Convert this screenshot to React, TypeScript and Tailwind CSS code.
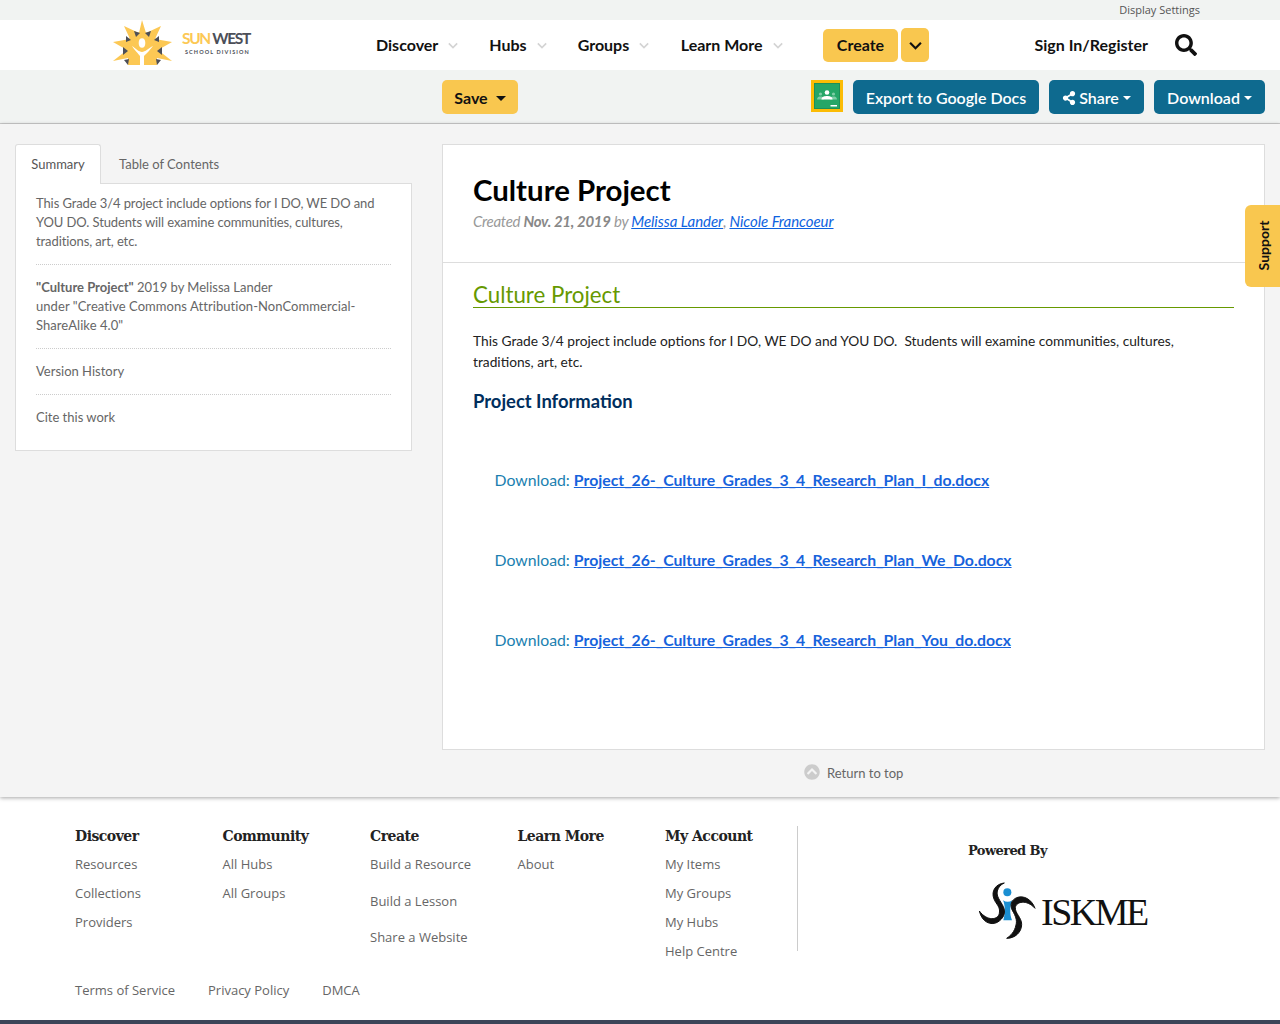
import React from "react";
import { FaSearch, FaShareAlt, FaChevronCircleUp } from "react-icons/fa";

const lato = "font-['Lato',sans-serif]";
const open = "font-['Open_Sans',sans-serif]";

function Caret({ className = "" }: { className?: string }) {
  return <span className={`inline-block w-0 h-0 border-x-[4px] border-x-transparent border-t-[4px] border-t-current ${className}`} />;
}

function Chevron({ className = "" }: { className?: string }) {
  return (
    <svg viewBox="0 0 12 8" className={className} fill="none" stroke="currentColor" strokeWidth="2">
      <path d="M1 1.5 6 6.5 11 1.5" />
    </svg>
  );
}

function SunLogo() {
  return (
    <svg viewBox="0 0 60 45" className="w-[60px] h-[45px] block shrink-0">
      <g fill="#fcc854">
        <path d="M29 0 33 13 48 6 42 19 59 22 45 30 59 41 44 38 44 45 15 45 15 38 0 41 14 30 0 22 17 19 11 6 26 13Z" />
        <circle cx="29.5" cy="29" r="17" />
      </g>
      <g fill="#4c4f58">
        <path d="M21 11 27 13 23 17Z" />
        <path d="M32 13 38 11 36 17Z" />
        <path d="M13 16 18 20 13 22Z" />
        <path d="M46 16 41 20 46 22Z" />
        <path d="M10 27 15 31 10 35Z" />
        <path d="M49 27 44 31 49 35Z" />
        <path d="M11 40 16 39 15 45Z" />
        <path d="M48 40 43 39 44 45Z" />
      </g>
      <ellipse cx="29" cy="23" rx="3.300" ry="4.800" fill="#fff" />
      <path d="M19 26C22 31 25 33 27 36L27 45 31 45 31 36C34 33 37 30 40 26 36 28 32 32 29 32 26 32 22 28 19 26Z" fill="#fff" />
    </svg>
  );
}

function NavItem({ label, className = "" }: { label: string; className?: string }) {
  return (
    <div className={`flex items-center ${className}`}>
      <span className="text-[16px] font-bold text-[#111] leading-none">{label}</span>
      <Chevron className="w-[10px] h-[7px] ml-[10px] text-[#d4d4d4]" />
    </div>
  );
}

function Classroom() {
  return (
    <div className="w-[32px] h-[32px] border-[3px] border-[#fbbc05] bg-[#25a667] shrink-0">
      <svg viewBox="0 0 26 26" className="w-[26px] h-[26px] block">
        <rect x="0.500" y="0.500" width="25" height="25" fill="none" stroke="#1e8f58" />
        <circle cx="6.500" cy="11" r="1.600" fill="#7fcda6" />
        <circle cx="19.500" cy="11" r="1.600" fill="#7fcda6" />
        <path d="M3 16.500C3 14 5 13.500 6.500 13.500S10 14 10 16.500ZM16 16.500C16 14 18 13.500 19.500 13.500S23 14 23 16.500Z" fill="#7fcda6" />
        <circle cx="13" cy="9.500" r="2.300" fill="#fff" />
        <path d="M7.500 16.500C7.500 13.500 10.500 13 13 13S18.500 13.500 18.500 16.500Z" fill="#fff" />
        <rect x="16.500" y="22" width="6.500" height="1.500" fill="#fff" />
      </svg>
    </div>
  );
}

function BlueBtn({ children, className = "" }: { children: React.ReactNode; className?: string }) {
  return (
    <button className={`h-[34px] pt-[2px] rounded-[5px] bg-[#0e6a8f] text-white text-[16px] font-semibold flex items-center justify-center ${className}`}>
      {children}
    </button>
  );
}

function Header() {
  return (
    <header className={lato}>
      <div className="h-5 bg-[#f1f3f2] flex justify-end pr-[80px] pb-[1px] items-center">
        <a className={`${open} text-[11px] text-[#555] leading-none`}>Display Settings</a>
      </div>
      <div className="h-[50px] bg-white flex items-center relative">
        <div className="ml-[113px] w-[263px] flex items-start h-[45px] self-start">
          <SunLogo />
          <div className="ml-[9px] mt-[10px]">
            <div className="text-[15.500px] font-bold leading-[16px] tracking-[-1.350px]">
              <span className="text-[#fcc854]">SUN</span> <span className="text-[#4c4f58]">WEST</span>
            </div>
            <div className="text-[5.500px] font-bold text-[#4c4f58] tracking-[1.100px] leading-[7px] mt-[2.500px] pl-[3px] whitespace-nowrap">SCHOOL DIVISION</div>
          </div>
        </div>
        <div className="flex items-center gap-[32px] w-[447px]">
          <NavItem label="Discover" />
          <NavItem label="Hubs" className="-ml-[1px]" />
          <NavItem label="Groups" className="-ml-[1px]" />
          <NavItem label="Learn More" className="-ml-[0.500px]" />
        </div>
        <div className="flex items-center">
          <button className="w-[75px] h-[33px] bg-[#f9c74f] rounded-[5px] text-[16px] font-bold text-[#111]">Create</button>
          <button className="ml-[3px] w-[28px] h-[34px] bg-[#f9c74f] rounded-[5px] flex items-center justify-center text-[#111]">
            <Chevron className="w-[13px] h-[9px]" />
          </button>
        </div>
        <span className="ml-[105.500px] text-[16px] font-bold text-[#111]">Sign In/Register</span>
        <FaSearch className="ml-[26.500px] w-[22px] h-[22px] text-[#111]" />
      </div>
      <div className="h-[54px] bg-[#f1f3f2] border-b border-[#ccc] flex pt-[10px]">
        <button className="ml-[442px] w-[76px] h-[34px] pt-[2px] rounded-[5px] bg-[#f9c74f] text-[16px] font-bold text-[#111] flex items-center justify-center">
          Save
          <Caret className="ml-[8px] !border-x-[5px] !border-t-[5px]" />
        </button>
        <div className="ml-auto pr-[15px] flex gap-[10px] items-start">
          <Classroom />
          <BlueBtn className="w-[186px]">Export to Google Docs</BlueBtn>
          <BlueBtn className="w-[95px]">
            <FaShareAlt className="w-[14px] h-[14px] mr-[3px] -mt-[1px]" />
            Share
            <Caret className="ml-[4px]" />
          </BlueBtn>
          <BlueBtn className="w-[111px]">
            Download
            <Caret className="ml-[4px]" />
          </BlueBtn>
        </div>
      </div>
    </header>
  );
}

function Sidebar() {
  const row = "pt-[13px] pb-[13px] mx-[20px] border-b border-dotted border-[#ccc]";
  return (
    <aside className={`w-[397px] shrink-0 text-[13px] leading-[19px] text-[#666] ${lato}`}>
      <div className="flex h-[40px] relative z-10">
        <div className="w-[86px] h-[40px] pb-[1px] bg-white border border-[#ddd] border-b-0 rounded-t-[3px] flex items-center justify-center text-[#555]">Summary</div>
        <div className="ml-[18px] flex items-center text-[#666]">Table of Contents</div>
      </div>
      <div className="bg-white border border-[#ddd] -mt-[1px] h-[268px] pt-[1px]">
        <div className={`${row} !pt-[9px] tracking-[-0.100px]`}>
          This Grade 3/4 project include options for I DO, WE DO and YOU DO. Students will examine communities, cultures, traditions, art, etc.
        </div>
        <div className={row}>
          <b>"Culture Project"</b> 2019 by Melissa Lander
          <br />
          <span className="tracking-[0.060px]">under "Creative Commons Attribution-NonCommercial-ShareAlike 4.0"</span>
        </div>
        <div className={row}>Version History</div>
        <div className="pt-[13px] mx-[20px]">Cite this work</div>
      </div>
    </aside>
  );
}

function Dl({ file }: { file: string }) {
  return (
    <p className="text-[15.800px] leading-[22px] text-[#1b7fb0] pl-[21.500px] h-[80px]">
      Download:{" "}
      <a className="font-bold text-[#1763dc] underline">{file}</a>
    </p>
  );
}

function Article() {
  return (
    <article className={`w-[823px] h-[606px] bg-white border border-[#ddd] ${lato}`}>
      <div className="h-[118px] border-b border-[#ddd] pl-[30px] pt-[26px]">
        <h1 className="text-[29.400px] font-bold leading-[38px] text-black">Culture Project</h1>
        <p className="text-[15px] italic text-[#999] leading-[20px] mt-[2px] tracking-[-0.280px]">
          Created <b className="text-[#888]">Nov. 21, 2019</b> by{" "}
          <a className="text-[#0d62e0] underline tracking-[-0.050px]">Melissa Lander</a>,{" "}
          <a className="text-[#0d62e0] underline tracking-[-0.050px]">Nicole Francoeur</a>
        </p>
      </div>
      <div className="pl-[30px] pr-[30px] pt-[20px]">
        <h2 className="text-[22.300px] leading-[24px] text-[#669900] border-b border-[#669900]">Culture Project</h2>
        <p className="text-[13.750px] leading-[21px] text-[#222] mt-[22px] pr-[20px]">
          This Grade 3/4 project include options for I DO, WE DO and YOU DO.&nbsp; Students will examine communities, cultures, traditions, art, etc.
        </p>
        <h3 className="text-[18.400px] font-bold leading-[24px] text-[#002e5d] mt-[17px]">Project Information</h3>
        <div className="mt-[56px]">
          <Dl file="Project_26-_Culture_Grades_3_4_Research_Plan_I_do.docx" />
          <Dl file="Project_26-_Culture_Grades_3_4_Research_Plan_We_Do.docx" />
          <Dl file="Project_26-_Culture_Grades_3_4_Research_Plan_You_do.docx" />
        </div>
      </div>
    </article>
  );
}

function FootCol({ title, items, gap = "gap-[10px]" }: { title: string; items: string[]; gap?: string }) {
  return (
    <div className="w-[147.500px] shrink-0">
      <h4 className="font-['DejaVu_Serif',serif] font-bold text-[14px] leading-[20px] text-[#222] tracking-[-0.500px]">{title}</h4>
      <ul className={`flex flex-col mt-[9px] ${gap}`}>
        {items.map((i) => (
          <li key={i} className={`${open} text-[13px] leading-[19px] text-[#666]`}>{i}</li>
        ))}
      </ul>
    </div>
  );
}

function IskmeMark() {
  return (
    <svg viewBox="0 0 240 210" className="w-[80px] h-[70px] shrink-0">
      <circle cx="112" cy="52" r="12" fill="#1b8fd2" />
      <path d="M99 76C108 82 118 82 127 76 120 92 118 115 126 136L100 136C106 115 106 92 99 76Z" fill="#1b8fd2" />
      <g fill="#111" stroke="#111" strokeWidth="3" strokeLinejoin="round">
        <path d="M103 24C78 26 62 48 72 72 78 88 92 95 88 115 84 135 52 140 28 108 36 142 62 152 82 142 102 130 108 112 100 95 92 78 78 65 82 48 85 36 93 28 103 24Z" />
        <path d="M195 100C185 72 160 60 140 68 124 75 118 90 128 108 136 122 142 135 138 150 134 170 122 182 110 190 135 190 155 172 155 148 155 128 135 115 136 98 138 80 170 72 195 100Z" />
      </g>
    </svg>
  );
}

function Footer() {
  return (
    <footer className="bg-white relative">
      <div className="h-[223px] pl-[75px] pt-[29px]">
        <div className="flex items-start h-[125px]">
          <div className="flex w-[723px] h-[125px] border-r border-[#ccc]">
            <FootCol title="Discover" items={["Resources", "Collections", "Providers"]} />
            <FootCol title="Community" items={["All Hubs", "All Groups"]} />
            <FootCol title="Create" items={["Build a Resource", "Build a Lesson", "Share a Website"]} gap="gap-[17.500px]" />
            <FootCol title="Learn More" items={["About"]} />
            <FootCol title="My Account" items={["My Items", "My Groups", "My Hubs", "Help Centre"]} />
          </div>
          <div className="ml-[170px] pt-[15px]">
            <div className="font-['DejaVu_Serif',serif] font-bold text-[13px] leading-[20px] text-[#222] tracking-[-0.600px]">Powered By</div>
            <div className="flex items-center ml-[2px] mt-[14px]">
              <IskmeMark />
              <span className="font-['Liberation_Serif',serif] text-[38px] leading-[44px] text-[#111] -ml-[9px] mt-[3px] tracking-[-2.500px]">ISKME</span>
            </div>
          </div>
        </div>
        <div className={`${open} text-[13px] leading-[19px] text-[#666] flex gap-[33px] mt-[30px]`}>
          <span>Terms of Service</span>
          <span>Privacy Policy</span>
          <span>DMCA</span>
        </div>
      </div>
      <div className="h-[4px] bg-[#3c4558]" />
    </footer>
  );
}

export default function App() {
  return (
    <div className="min-h-screen bg-[#f4f4f4] relative overflow-hidden">
      <Header />
      <main className="h-[673px] relative z-10 shadow-[0_1px_4px_rgba(0,0,0,0.35)] bg-[#f4f4f4]">
        <div className="flex gap-[30px] pl-[15px] pt-[20px]">
          <Sidebar />
          <Article />
        </div>
        <div className={`flex items-center ml-[804px] mt-[14px] ${lato} text-[13px] text-[#666]`}>
          <FaChevronCircleUp className="w-[16px] h-[16px] text-[#ccc] mr-[7px] -mt-[3px]" />
          Return to top
        </div>
      </main>
      <Footer />
      <div className={`absolute z-20 right-0 top-[205px] w-[35px] h-[82px] pl-[2px] pb-[1px] bg-[#f9c74f] rounded-l-[6px] flex items-center justify-center ${lato}`}>
        <span className="-rotate-90 text-[14px] font-bold text-[#111] whitespace-nowrap">Support</span>
      </div>
    </div>
  );
}
